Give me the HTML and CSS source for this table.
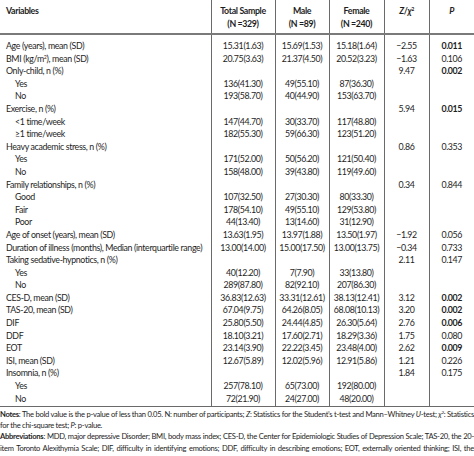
FILE: index.html
```html
<!DOCTYPE html>
<html>
<head>
<meta charset="utf-8">
<link rel="stylesheet" href="styles.css">
</head>
<body>
<table class="tbl">
<colgroup>
<col class="c-var"><col class="c-tot"><col class="c-m"><col class="c-f"><col class="c-z"><col class="c-p">
</colgroup>
<thead>
<tr>
<th class="var">Variables</th>
<th>Total Sample<br>(N =329)</th>
<th>Male<br>(N =89)</th>
<th>Female<br>(N =240)</th>
<th class="top"><i>Z</i>/<i>χ</i><sup>2</sup></th>
<th class="top"><i>P</i></th>
</tr>
</thead>
<tbody>
<tr class="first"><td class="var">Age (years), mean (SD)</td><td>15.31(1.63)</td><td>15.69(1.53)</td><td>15.18(1.64)</td><td>−2.55</td><td><b>0.011</b></td></tr>
<tr><td class="var">BMI (kg/m<sup>2</sup>), mean (SD)</td><td>20.75(3.63)</td><td>21.37(4.50)</td><td>20.52(3.23)</td><td>−1.63</td><td>0.106</td></tr>
<tr><td class="var">Only-child, n (%)</td><td></td><td></td><td></td><td>9.47</td><td><b>0.002</b></td></tr>
<tr><td class="var sub">Yes</td><td>136(41.30)</td><td>49(55.10)</td><td>87(36.30)</td><td></td><td></td></tr>
<tr><td class="var sub">No</td><td>193(58.70)</td><td>40(44.90)</td><td>153(63.70)</td><td></td><td></td></tr>
<tr><td class="var">Exercise, n (%)</td><td></td><td></td><td></td><td>5.94</td><td><b>0.015</b></td></tr>
<tr><td class="var sub">&lt;1 time/week</td><td>147(44.70)</td><td>30(33.70)</td><td>117(48.80)</td><td></td><td></td></tr>
<tr><td class="var sub">≥1 time/week</td><td>182(55.30)</td><td>59(66.30)</td><td>123(51.20)</td><td></td><td></td></tr>
<tr><td class="var">Heavy academic stress, n (%)</td><td></td><td></td><td></td><td>0.86</td><td>0.353</td></tr>
<tr><td class="var sub">Yes</td><td>171(52.00)</td><td>50(56.20)</td><td>121(50.40)</td><td></td><td></td></tr>
<tr><td class="var sub">No</td><td>158(48.00)</td><td>39(43.80)</td><td>119(49.60)</td><td></td><td></td></tr>
<tr><td class="var">Family relationships, n (%)</td><td></td><td></td><td></td><td>0.34</td><td>0.844</td></tr>
<tr><td class="var sub">Good</td><td>107(32.50)</td><td>27(30.30)</td><td>80(33.30)</td><td></td><td></td></tr>
<tr><td class="var sub">Fair</td><td>178(54.10)</td><td>49(55.10)</td><td>129(53.80)</td><td></td><td></td></tr>
<tr><td class="var sub">Poor</td><td>44(13.40)</td><td>13(14.60)</td><td>31(12.90)</td><td></td><td></td></tr>
<tr><td class="var">Age of onset (years), mean (SD)</td><td>13.63(1.95)</td><td>13.97(1.88)</td><td>13.50(1.97)</td><td>−1.92</td><td>0.056</td></tr>
<tr><td class="var">Duration of illness (months), Median (interquartile range)</td><td>13.00(14.00)</td><td>15.00(17.50)</td><td>13.00(13.75)</td><td>−0.34</td><td>0.733</td></tr>
<tr><td class="var">Taking sedative-hypnotics, n (%)</td><td></td><td></td><td></td><td>2.11</td><td>0.147</td></tr>
<tr><td class="var sub">Yes</td><td>40(12.20)</td><td>7(7.90)</td><td>33(13.80)</td><td></td><td></td></tr>
<tr><td class="var sub">No</td><td>289(87.80)</td><td>82(92.10)</td><td>207(86.30)</td><td></td><td></td></tr>
<tr><td class="var">CES-D, mean (SD)</td><td>36.83(12.63)</td><td>33.31(12.61)</td><td>38.13(12.41)</td><td>3.12</td><td><b>0.002</b></td></tr>
<tr><td class="var">TAS-20, mean (SD)</td><td>67.04(9.75)</td><td>64.26(8.05)</td><td>68.08(10.13)</td><td>3.20</td><td><b>0.002</b></td></tr>
<tr><td class="var">DIF</td><td>25.80(5.50)</td><td>24.44(4.85)</td><td>26.30(5.64)</td><td>2.76</td><td><b>0.006</b></td></tr>
<tr><td class="var">DDF</td><td>18.10(3.21)</td><td>17.60(2.71)</td><td>18.29(3.36)</td><td>1.75</td><td>0.080</td></tr>
<tr><td class="var">EOT</td><td>23.14(3.90)</td><td>22.22(3.45)</td><td>23.48(4.00)</td><td>2.62</td><td><b>0.009</b></td></tr>
<tr><td class="var">ISI, mean (SD)</td><td>12.67(5.89)</td><td>12.02(5.96)</td><td>12.91(5.86)</td><td>1.21</td><td>0.226</td></tr>
<tr><td class="var">Insomnia, n (%)</td><td></td><td></td><td></td><td>1.84</td><td>0.175</td></tr>
<tr><td class="var sub">Yes</td><td>257(78.10)</td><td>65(73.00)</td><td>192(80.00)</td><td></td><td></td></tr>
<tr class="last"><td class="var sub">No</td><td>72(21.90)</td><td>24(27.00)</td><td>48(20.00)</td><td></td><td></td></tr>
</tbody>
</table>
<div class="notes">
<p><b>Notes</b>: The bold value is the p-value of less than 0.05. N: number of participants; <i>Z</i>: Statistics for the Student’s t-test and Mann–Whitney <i>U</i>-test; <i>χ</i><sup>2</sup>: Statistics for the chi-square test; <i>P</i>: p-value.</p>
<p><b>Abbreviations</b>: MDD, major depressive Disorder; BMI, body mass index; CES-D, the Center for Epidemiologic Studies of Depression Scale; TAS-20, the 20-item Toronto Alexithymia Scale; DIF, difficulty in identifying emotions; DDF, difficulty in describing emotions; EOT, externally oriented thinking; ISI, the Insomnia Severity Index Scale.</p>
</div>
</body>
</html>
```
FILE: styles.css
```css
html, body {
  margin: 0;
  padding: 0;
  background: #fff;
  overflow: hidden;
}
body {
  width: 474px;
  font-family: Lato, "Open Sans", sans-serif;
  color: #1e1e1e;
}
.tbl {
  border-collapse: collapse;
  table-layout: fixed;
  width: 474px;
  font-size: 8.8px;
  letter-spacing: -0.35px;
}
.c-var { width: 211px; }
.c-tot { width: 64px; }
.c-m { width: 54px; }
.c-f { width: 55px; }
.c-z { width: 45px; }
.c-p { width: 45px; }
.tbl th, .tbl td {
  padding: 0;
  text-align: center;
  white-space: nowrap;
  border-left: 1px solid #6a6a6a;
}
.tbl th:first-child, .tbl td:first-child { border-left: none; }
.tbl thead th {
  font-weight: bold;
  height: 29px;
  line-height: 13px;
  vertical-align: middle;
  border-bottom: 2px solid #7a7a7a;
  padding-top: 1px;
}
.tbl thead th.top { vertical-align: top; padding-top: 4px; }
.tbl thead th.var { text-align: left; vertical-align: top; padding-top: 4px; padding-left: 6px; }
.tbl td {
  height: 12.6px;
  line-height: 12.6px;
}
.tbl td.var { text-align: left; padding-left: 6px; }
.tbl td.sub { padding-left: 15px; }
.tbl tr.first td { padding-top: 5px; }
.tbl tr.last td { border-bottom: 1px solid #6a6a6a; padding-bottom: 1px; }
sup { font-size: 0.6em; line-height: 0; vertical-align: 0.6em; }
.notes {
  font-size: 7.6px;
  letter-spacing: -0.28px;
  line-height: 11.1px;
  padding-top: 2px;
  text-align: justify;
}
.notes p { margin: 0; }
```
